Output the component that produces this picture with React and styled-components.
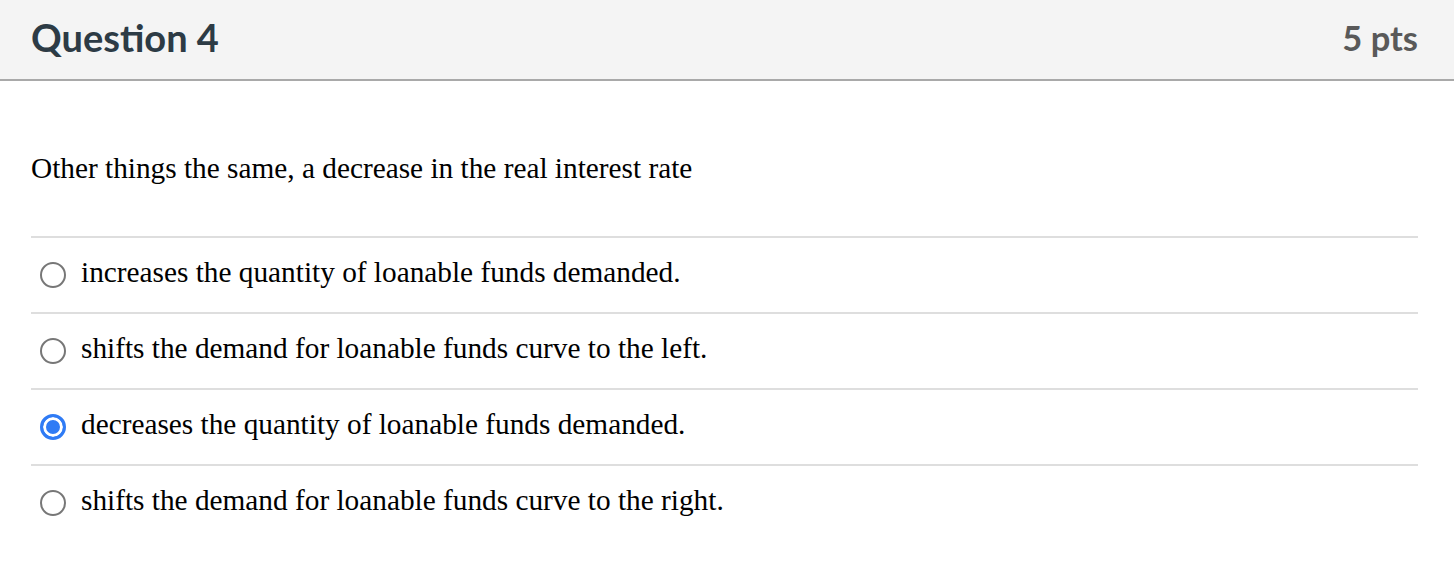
import styled, { createGlobalStyle } from 'styled-components';

const GlobalStyle = createGlobalStyle`
  body {
    margin: 0;
    background: #fff;
  }
`;

const question = {
  title: 'Question 4',
  points: '5 pts',
  text: 'Other things the same, a decrease in the real interest rate',
  answers: [
    { id: 'a', label: 'increases the quantity of loanable funds demanded.' },
    { id: 'b', label: 'shifts the demand for loanable funds curve to the left.' },
    { id: 'c', label: 'decreases the quantity of loanable funds demanded.', checked: true },
    { id: 'd', label: 'shifts the demand for loanable funds curve to the right.' },
  ],
};

const App = () => {
  return (
    <>
      <GlobalStyle />
      <Card>
        <Header>
          <Title>{question.title}</Title>
          <Points>{question.points}</Points>
        </Header>
        <Body>
          <Prompt>{question.text}</Prompt>
          <Answers>
            {question.answers.map((a) => (
              <Answer key={a.id}>
                <Radio checked={!!a.checked} readOnly type="radio" name="q4" />
                <Label>{a.label}</Label>
              </Answer>
            ))}
          </Answers>
        </Body>
      </Card>
    </>
  );
};

const Card = styled.div`
  width: 100%;
`;

const Header = styled.div`
  height: 79px;
  background: #f4f4f4;
  border-bottom: 2px solid #a9a9a9;
  display: flex;
  align-items: center;
  justify-content: space-between;
  padding: 0 36px 0 31px;
  font-family: Lato, 'Liberation Sans', sans-serif;
  font-weight: 700;
`;

const Title = styled.h2`
  margin: 0;
  font-size: 38px;
  font-weight: 700;
  color: #2d3b45;
  margin-top: -5px;
`;

const Points = styled.span`
  font-size: 34.5px;
  color: #595959;
  margin-top: -5px;
`;

const Body = styled.div`
  padding: 0 36px 0 31px;
  font-family: 'Liberation Serif', 'Times New Roman', serif;
  color: #000;
`;

const Prompt = styled.p`
  margin: 0;
  padding: 70px 0 51px;
  font-size: 29.3px;
  line-height: 34px;
`;

const Answers = styled.div`
  display: flex;
  flex-direction: column;
`;

const Answer = styled.label`
  display: flex;
  align-items: center;
  height: 76px;
  border-top: 2px solid #dedede;
  box-sizing: border-box;
`;

const Radio = styled.input`
  appearance: none;
  margin: 0 15px 0 9px;
  width: 26px;
  height: 26px;
  border-radius: 50%;
  border: ${(p) => (p.checked ? '3px solid #2f7bf5' : '2px solid #777')};
  background: ${(p) => (p.checked ? '#2f7bf5' : '#fff')};
  box-shadow: ${(p) => (p.checked ? 'inset 0 0 0 3px #fff' : 'none')};
  box-sizing: border-box;
  flex-shrink: 0;
`;

const Label = styled.span`
  font-size: 29.3px;
  line-height: 34px;
  margin-bottom: 6px;
`;

export default App;
